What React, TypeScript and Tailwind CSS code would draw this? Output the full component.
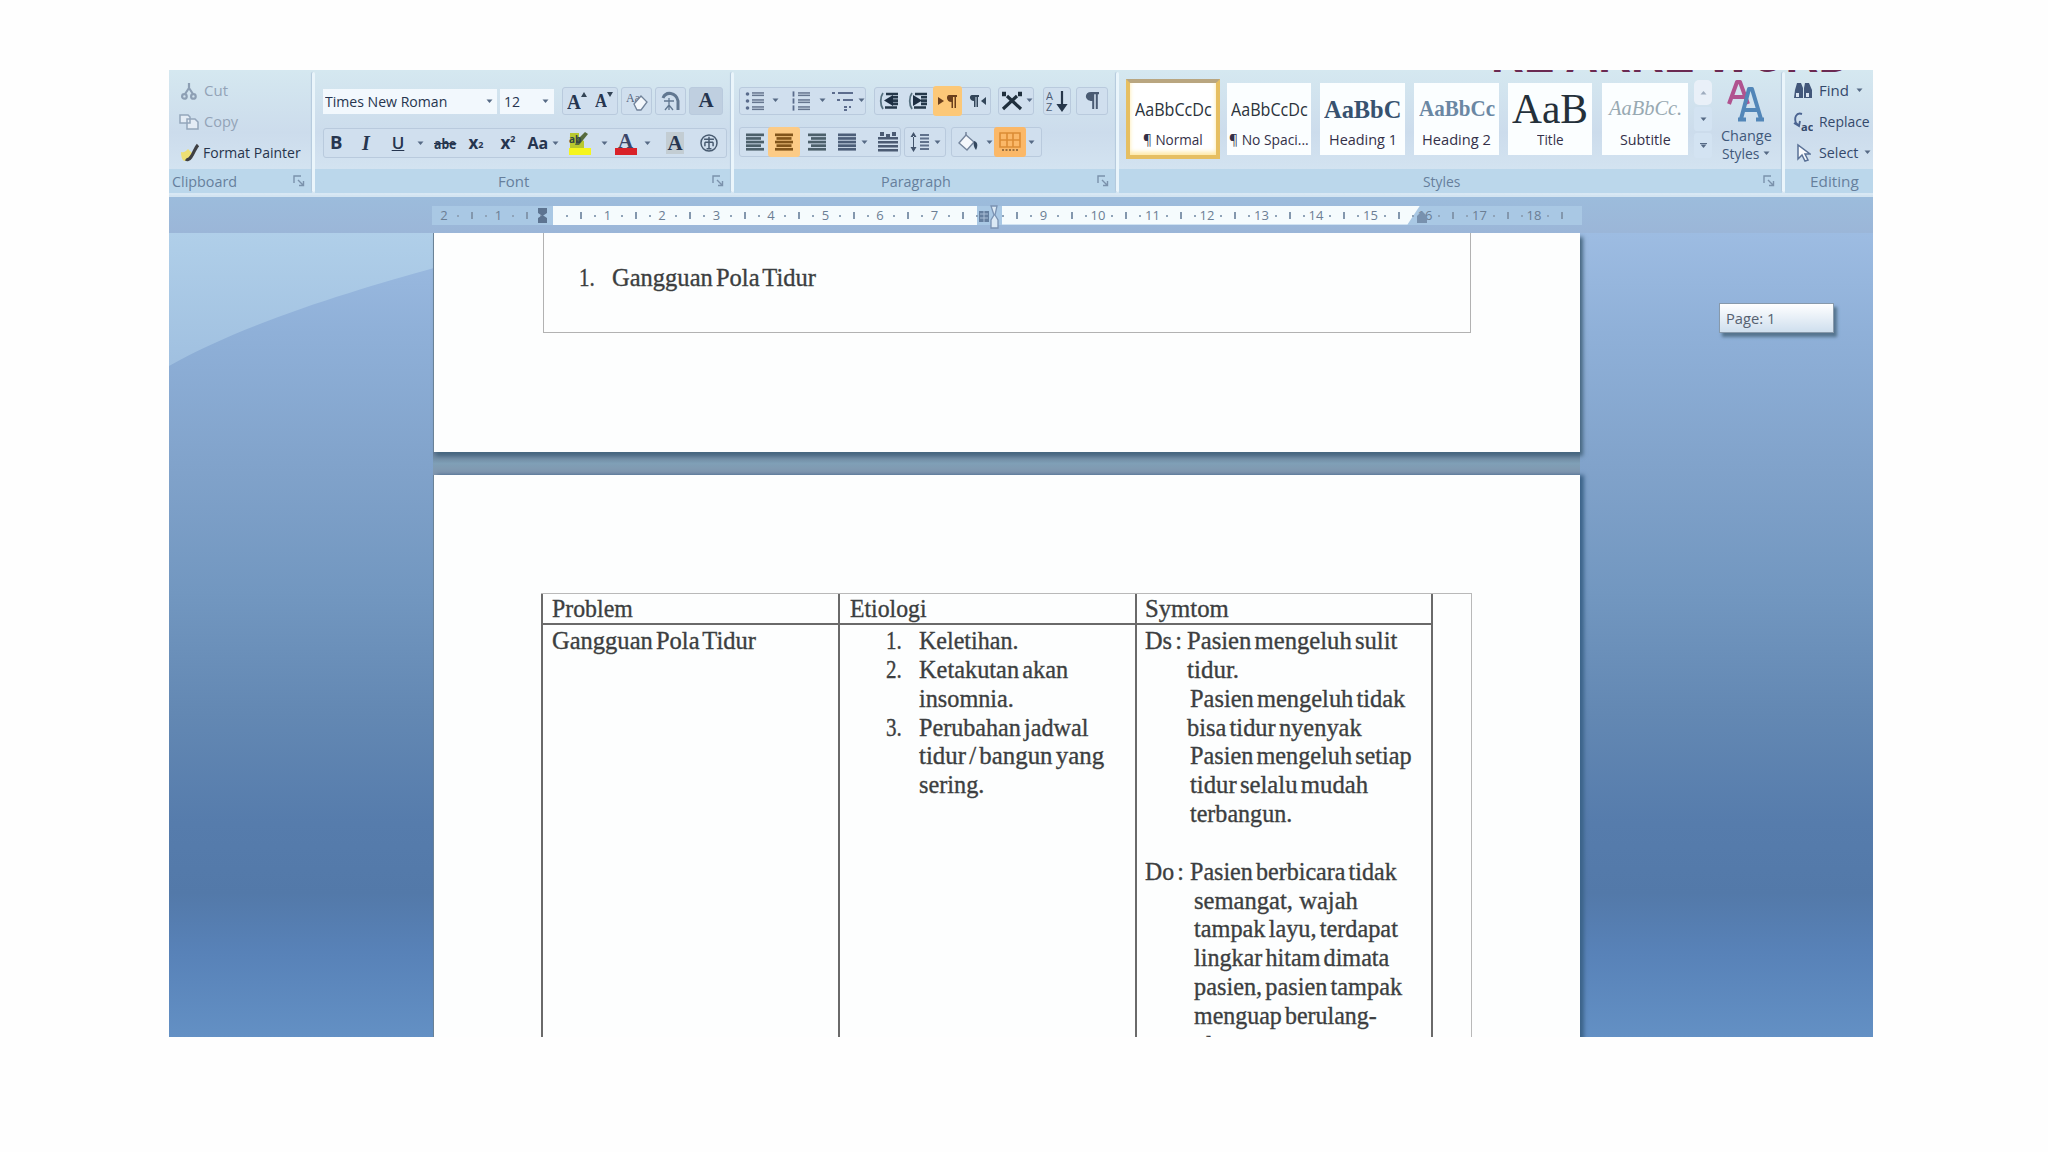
import React, { useLayoutEffect, useRef, useState } from "react";

/* Text that is squeezed or stretched horizontally to a given width. */
function Fit({ w, className = "", children }: { w: number; className?: string; children: React.ReactNode }) {
  const ref = useRef<HTMLSpanElement>(null);
  const [s, setS] = useState(1);
  useLayoutEffect(() => {
    if (ref.current) setS(w / ref.current.offsetWidth);
  }, [w]);
  return (
    <span className={"inline-block shrink-0 whitespace-pre text-left " + className} style={{ width: w }}>
      <span ref={ref} className="inline-block origin-left [text-decoration:inherit]" style={{ transform: `scaleX(${s})` }}>
        {children}
      </span>
    </span>
  );
}

function Cell({ c, children }: { c: string; children?: React.ReactNode }) {
  return <div className={"flex h-full shrink-0 items-center justify-center whitespace-nowrap " + c}>{children}</div>;
}

function Arrow() {
  return (
    <svg width="7" height="5" viewBox="0 0 7 5" className="shrink-0">
      <path d="M0.5 0.5h6L3.5 4z" fill="#566a85" />
    </svg>
  );
}

function Launcher() {
  return (
    <svg width="12" height="12" viewBox="0 0 12 12" fill="none" stroke="#7b92ac" strokeWidth="1.4">
      <path d="M1 8V1h7M5 5l5 5M10.5 6v4.5H6" />
    </svg>
  );
}

function Lines({ ws, align = "start", color = "#4c606b" }: { ws: number[]; align?: string; color?: string }) {
  return (
    <svg width="18" height="18" viewBox="0 0 18 18" className="shrink-0">
      {ws.map((w, i) => (
        <rect key={i} x={align === "start" ? 0 : align === "end" ? 18 - w : (18 - w) / 2} y={0.5 + i * 3.6} width={w} height="2.7" fill={color} />
      ))}
    </svg>
  );
}

function ListIcon({ kind }: { kind: "dots" | "nums" }) {
  return (
    <svg width="19" height="20" viewBox="0 0 19 20" className="shrink-0">
      {[3, 10, 17].map((y) => (
        <g key={y}>
          {kind === "dots" ? <circle cx="2.5" cy={y} r="1.8" fill="#5a6c8c" /> : <rect x="1.6" y={y - 2.6} width="1.8" height="5.2" fill="#5a6c8c" />}
          <rect x="7" y={y - 1.8} width="12" height="1.5" fill="#66768f" />
          <rect x="7" y={y + 0.6} width="12" height="1.5" fill="#66768f" />
        </g>
      ))}
    </svg>
  );
}

function IndentIcon({ dir }: { dir: "l" | "r" }) {
  return (
    <svg width="20" height="18" viewBox="0 0 20 18" className="shrink-0">
      <path d="M4 1C1 5 1 13 4 17" stroke="#55707f" strokeWidth="1.8" fill="none" />
      <path d="M7 2h12M13 5.3h6M13 8.6h6M13 11.9h6M6 15.5h12" stroke="#24384a" strokeWidth="2.6" />
      <path d={dir === "l" ? "M5 8.500l9-5.500v11z" : "M14 8.500L5 3v11z"} fill="#1c2e42" />
    </svg>
  );
}

const sep = <div className="mt-[2px] mb-[3px] w-[3px] shrink-0 rounded-full bg-[#eaf5fb] shadow-[-1px_0_1px_#b4c9dc]" />;
const box = "flex h-[28px] shrink-0 items-center rounded-[3px] border border-[#b9cadd] bg-[#d0dfee]";

function Group({ c, label, labelClass, launcher, children }: { c: string; label: React.ReactNode; labelClass?: string; launcher?: boolean; children: React.ReactNode }) {
  return (
    <div className={"flex shrink-0 flex-col " + c}>
      <div className="h-[99px]">{children}</div>
      <div className={"flex h-[24px] items-center bg-[#bbd7eb] text-[15px] text-[#667f9c] " + (labelClass ?? "justify-center")}>
        <span className={launcher ? "flex flex-1 justify-center" : ""}>{label}</span>
        {launcher && <span className="mr-[7px]"><Launcher /></span>}
      </div>
    </div>
  );
}

function StyleCard({ c, sample, name, on }: { c: string; sample: React.ReactNode; name: React.ReactNode; on?: boolean }) {
  return (
    <div
      className={
        "flex shrink-0 flex-col items-center overflow-hidden " +
        (on
          ? "h-[80px] border-4 border-[#e6bf62] border-t-[#b9a680] bg-white shadow-[inset_0_-3px_4px_#ffe9a6] "
          : "h-[72px] bg-[#fbfeff] ") + c
      }
    >
      <div className="mt-[7px] flex h-[38px] w-full items-center justify-center">{sample}</div>
      <div className="flex h-[22px] items-center text-[14px] font-medium text-[#343048]">{name}</div>
    </div>
  );
}

function Ribbon() {
  return (
    <div className="relative h-[127px] overflow-hidden bg-[#d3e4f1]">
      <div className="flex h-[125px] bg-linear-to-b from-[#d5e8f0] via-[#ccdcec] to-[#d8e8f4]">
        <Group c="w-[143px]" launcher labelClass="" label={<span className="-ml-[54px]"><Fit w={65}>Clipboard</Fit></span>}>
          <div className="flex h-full flex-col pt-[5px] text-[15px] text-[#93a3b7]">
            <div className="flex h-[31px] items-center">
              <span className="ml-[12px] flex w-[23px]">
                <svg width="16" height="18" viewBox="0 0 16 18" fill="none" stroke="#8d9fb4" strokeWidth="2.2">
                  <path d="M8 1v5l-4 6M8 6l4 6" /><circle cx="3.4" cy="14.4" r="2.3" /><circle cx="12.4" cy="14.4" r="2.3" />
                </svg>
              </span>
              <Fit w={24}>Cut</Fit>
            </div>
            <div className="flex h-[31px] items-center">
              <span className="ml-[10px] flex w-[25px]">
                <svg width="20" height="17" viewBox="0 0 20 17" fill="#e4ecf5" stroke="#94a6bb" strokeWidth="1.5">
                  <path d="M1 2h8l2 2v6H1zM8 6h8l3 3v7H8z" />
                </svg>
              </span>
              <Fit w={34}>Copy</Fit>
            </div>
            <div className="flex h-[31px] items-center text-[#27344c]">
              <span className="ml-[11px] flex w-[23px]">
                <svg width="20" height="20" viewBox="0 0 20 20">
                  <path d="M1 9c3 1 5-1 7-3l5 5c-2 3-4 6-8 7-3 0-4-5-4-9z" fill="#eddf74" />
                  <path d="M18 2c-3 3-4 8-7 12-2 3-4 3-5 2" fill="none" stroke="#3f4043" strokeWidth="3.2" />
                </svg>
              </span>
              <Fit w={98}>Format Painter</Fit>
            </div>
          </div>
        </Group>
        {sep}
        <Group c="w-[416px]" launcher labelClass="" label={<Fit w={31}>Font</Fit>}>
          <div className="flex h-full flex-col pt-[17px] pl-[8px] text-[#26354f]">
            <div className="flex h-[28px] items-center">
              <div className="flex h-[25px] w-[174px] items-center justify-between bg-[#f2f8fd] pr-[4px] pl-[2px] text-[15px]"><Fit w={122}>Times New Roman</Fit><Arrow /></div>
              <div className="ml-[3px] flex h-[25px] w-[54px] items-center justify-between bg-[#f2f8fd] pr-[5px] pl-[4px] text-[15px]"><Fit w={16}>12</Fit><Arrow /></div>
              <div className={box + " ml-[8px] w-[56px] font-['Liberation_Serif'] font-bold"}>
                <Cell c="w-[27px] text-[22px]"><Fit w={14}>A</Fit><svg width="6" height="5" className="mb-[14px]"><path d="M0 5L3 0l3 5z" fill="#345" /></svg></Cell>
                <Cell c="w-[28px] text-[18px]"><Fit w={12}>A</Fit><svg width="6" height="5" className="mb-[14px]"><path d="M0 0h6L3 5z" fill="#345" /></svg></Cell>
              </div>
              <div className={box + " ml-[3px] w-[31px]"}>
                <Cell c="w-[29px]"><svg width="22" height="22" viewBox="0 0 22 22"><text x="0" y="12" fontSize="12" fill="#51627a" fontFamily="Liberation Serif">Aa</text><path d="M8 14l7-8 6 6-6 8h-4z" fill="#f4f8fc" stroke="#71839a" strokeWidth="1.3" /></svg></Cell>
              </div>
              <div className={box + " ml-[3px] w-[31px]"}>
                <Cell c="w-[29px]"><svg width="22" height="22" viewBox="0 0 22 22" fill="none" stroke="#627891"><path d="M3 8C6 1 16 2 18 11v9" strokeWidth="3" /><path d="M4 11h10M9 8v12M5 20l4-5 4 5" strokeWidth="1.3" /></svg></Cell>
              </div>
              <div className="ml-[3px] flex h-[28px] w-[34px] shrink-0 items-center rounded-[3px] border border-[#b9cadd] bg-[#bfcfe0] font-['Liberation_Serif'] text-[21px] font-bold"><Cell c="w-full">A</Cell></div>
            </div>
            <div className={box + " mt-[13px] h-[30px] w-[404px] text-[17px] font-bold"}>
              <Cell c="w-[24px]"><Fit w={12}>B</Fit></Cell>
              <Cell c="w-[36px] font-['Liberation_Serif'] text-[20px] italic">I</Cell>
              <Cell c="w-[28px] font-semibold underline">U</Cell>
              <Cell c="w-[16px]"><Arrow /></Cell>
              <Cell c="w-[34px] text-[15px]"><Fit w={22} className="line-through">abe</Fit></Cell>
              <Cell c="w-[28px]">x<sub className="text-[9px]">2</sub></Cell>
              <Cell c="w-[36px]">x<sup className="text-[9px]">2</sup></Cell>
              <Cell c="w-[24px] text-[16px]"><Fit w={21}>Aa</Fit></Cell>
              <Cell c="w-[10px]"><Arrow /></Cell>
              <Cell c="w-[40px]">
                <svg width="24" height="25" viewBox="0 0 24 25"><path d="M2 2h9v5l5 3v9H2z" fill="#b9c92f" /><path d="M20 3l-9 11H7l2-5 8-8z" fill="#566a3c" /><text x="1" y="12" fontSize="10" fill="#344" fontFamily="Open Sans">ab</text><path d="M1 17h22v7H1z" fill="#f5f51d" /></svg>
              </Cell>
              <Cell c="w-[8px]"><Arrow /></Cell>
              <Cell c="w-[36px]">
                <svg width="24" height="25" viewBox="0 0 24 25"><text x="4" y="17" fontSize="21" fontWeight="bold" fill="#3c4668" fontFamily="Liberation Serif">A</text><path d="M1 17h22v7H1z" fill="#d92128" /></svg>
              </Cell>
              <Cell c="w-[6px]"><Arrow /></Cell>
              <Cell c="w-[50px] font-['Liberation_Serif'] text-[21px]"><span className="bg-[#c3cdd3] px-[1px] leading-[22px]">A</span></Cell>
              <Cell c="w-[18px]"><svg width="22" height="22" viewBox="0 0 22 22" fill="none" stroke="#475a70" strokeWidth="1.8"><circle cx="11" cy="11" r="9.8" /><path d="M5 6.5h12M11 3.5v15M6 10h10M6 10v5M16 10v5M8 18h6" /></svg></Cell>
            </div>
          </div>
        </Group>
        {sep}
        <Group c="w-[382px]" launcher labelClass="" label={<Fit w={70}>Paragraph</Fit>}>
          <div className="flex h-full flex-col pt-[15px] pl-[5px]">
            <div className="flex h-[31px] items-center">
              <div className={box + " w-[127px]"}>
                <Cell c="w-[29px]"><ListIcon kind="dots" /></Cell>
                <Cell c="w-[12px]"><Arrow /></Cell>
                <Cell c="w-[38px]"><ListIcon kind="nums" /></Cell>
                <Cell c="w-[6px]"><Arrow /></Cell>
                <Cell c="w-[34px]"><svg width="23" height="22" viewBox="0 0 23 22" stroke="#5c6d8e" strokeWidth="2"><path d="M1 3h3M7 3h15M6 10h3M12 10h10M13 17h3M18 17h2M13 20h3" /></svg></Cell>
                <Cell c="w-[4px]"><Arrow /></Cell>
              </div>
              <div className={box + " ml-[8px] w-[117px]"}>
                <Cell c="w-[28px]"><IndentIcon dir="l" /></Cell>
                <Cell c="w-[30px]"><IndentIcon dir="r" /></Cell>
                <div className="flex h-[30px] w-[29px] shrink-0 items-center justify-center rounded-[3px] bg-[#fcc878]">
                  <svg width="20" height="18" viewBox="0 0 20 18" fill="#6b3f1c"><path d="M0 5l6 4-6 4zM11 3h8v2h-1v11h-1.500V5h-1.500v11h-1.500v-6C8 10 8 3 11 3z" /></svg>
                </div>
                <Cell c="w-[29px]"><svg width="18" height="16" viewBox="0 0 18 16" fill="#33465a"><path d="M18 4l-5 4 5 4zM4 2h7v2h-1v10H8.500V4H7.500v10H6V8C1 8 1 2 4 2z" /></svg></Cell>
              </div>
              <div className={box + " ml-[7px] w-[36px]"}>
                <Cell c="w-[26px]"><svg width="22" height="20" viewBox="0 0 22 20" fill="none" stroke="#1f2f3d" strokeWidth="3.200"><path d="M2 18L16 5M6 5l14 13" /><path d="M1 3h4M17 3h4" strokeWidth="4.500" /></svg></Cell>
                <Cell c="w-[8px]"><Arrow /></Cell>
              </div>
              <div className={box + " ml-[9px] w-[28px]"}>
                <Cell c="w-full"><svg width="22" height="22" viewBox="0 0 22 22"><text x="0" y="10" fontSize="11" fill="#4b5c75" fontFamily="Open Sans">A</text><text x="0" y="21" fontSize="11" fill="#4b5c75" fontFamily="Open Sans">Z</text><path d="M16 1v17M12.5 15l3.500 5 3.500-5z" stroke="#26364a" strokeWidth="2.200" fill="#26364a" /></svg></Cell>
              </div>
              <div className={box + " ml-[5px] w-[32px]"}>
                <Cell c="w-full"><svg width="14" height="19" viewBox="0 0 14 19" fill="#4a5b73"><path d="M6 1h8v2.200h-1.200V18h-2V3.200H9.200V18h-2v-8C-1 10-1 1 6 1z" /></svg></Cell>
              </div>
            </div>
            <div className="mt-[10px] flex h-[32px] items-center">
              <div className={box + " h-[30px] w-[162px] pl-[2px]"}>
                <Cell c="w-[26px]"><Lines ws={[18, 15, 18, 15, 18]} /></Cell>
                <div className="flex h-[30px] w-[32px] shrink-0 items-center justify-center rounded-[3px] bg-[#fccb86]"><Lines ws={[18, 15, 18, 15, 18]} align="mid" color="#82551a" /></div>
                <Cell c="w-[34px]"><Lines ws={[18, 15, 18, 15, 18]} align="end" /></Cell>
                <Cell c="w-[26px]"><Lines ws={[18, 18, 18, 18, 18]} color="#4c5e78" /></Cell>
                <Cell c="w-[8px]"><Arrow /></Cell>
                <Cell c="w-[40px]"><svg width="20" height="20" viewBox="0 0 20 20" fill="#4b5b73"><path d="M2 0h4v4H2zM14 0h4v4h-4zM8 2h4v3H8zM0 5h20v2.500H0zM0 9h20v2.500H0zM0 13h20v2.500H0zM0 17h20v2.500H0z" /></svg></Cell>
              </div>
              <div className={box + " ml-[3px] h-[30px] w-[42px]"}>
                <Cell c="w-[29px]"><svg width="20" height="20" viewBox="0 0 20 20"><path d="M3.500 0l3 5h-6zM3.500 20l3-5h-6zM3 4v12h1V4z" fill="#43546c" /><path d="M10 3h9M10 6.500h9M10 10h9M10 13.500h9M10 17h9" stroke="#60728c" strokeWidth="1.800" /></svg></Cell>
                <Cell c="w-[6px]"><Arrow /></Cell>
              </div>
              <div className={box + " ml-[5px] h-[30px] w-[91px]"}>
                <Cell c="w-[32px]"><svg width="22" height="20" viewBox="0 0 22 20"><path d="M9 3l8 7-7 8-8-7z" fill="#f5f8fc" stroke="#75859c" strokeWidth="1.400" /><path d="M9 3V0" stroke="#75859c" strokeWidth="1.500" /><path d="M17 9c4 1 4 5 2 9-2-3-3-5-2-9z" fill="#34475e" /></svg></Cell>
                <Cell c="w-[10px]"><Arrow /></Cell>
                <div className="flex h-[30px] w-[32px] shrink-0 items-center justify-center rounded-[3px] bg-[#fbb868]"><svg width="22" height="20" viewBox="0 0 22 20" fill="none" stroke="#dc8c35" strokeWidth="1.600"><path d="M1 1h20v14H1zM8 1v14M14 1v14M1 8h20" /><path d="M3 18h16" stroke="#7d5a33" strokeDasharray="2 1.500" /></svg></div>
                <Cell c="w-[10px]"><Arrow /></Cell>
              </div>
            </div>
          </div>
        </Group>
        {sep}
        <Group c="w-[663px]" launcher labelClass="" label={<Fit w={37}>Styles</Fit>}>
          <div className="flex h-full items-center pb-[1px]">
            <StyleCard on c="ml-[7px] w-[94px]" sample={<Fit w={77} className="text-[18px] text-[#2b333b]">AaBbCcDc</Fit>} name={<Fit w={60}>¶ Normal</Fit>} />
            <StyleCard c="ml-[7px] w-[84px]" sample={<Fit w={77} className="text-[18px] text-[#2b333b]">AaBbCcDc</Fit>} name={<Fit w={80}>¶ No Spaci...</Fit>} />
            <StyleCard c="ml-[9px] w-[85px]" sample={<Fit w={77} className="font-['Liberation_Serif'] text-[26px] font-bold text-[#37526f]">AaBbC</Fit>} name={<Fit w={68}>Heading 1</Fit>} />
            <StyleCard c="ml-[9px] w-[85px]" sample={<Fit w={76} className="font-['Liberation_Serif'] text-[23px] font-bold text-[#6a87a3]">AaBbCc</Fit>} name={<Fit w={69}>Heading 2</Fit>} />
            <StyleCard c="ml-[9px] w-[84px]" sample={<Fit w={76} className="font-['Liberation_Serif'] text-[42px] leading-[36px] text-[#24303a]">AaB</Fit>} name={<Fit w={27}>Title</Fit>} />
            <StyleCard c="ml-[10px] w-[86px]" sample={<Fit w={73} className="font-['Liberation_Serif'] text-[21px] text-[#98a9b2] italic">AaBbCc.</Fit>} name={<Fit w={51}>Subtitle</Fit>} />
            <div className="ml-[6px] flex h-[78px] w-[18px] flex-col gap-[2px]">
              <div className="flex flex-1 items-center justify-center rounded-[5px] bg-[#e9f0f8]"><span className="rotate-180 opacity-50"><Arrow /></span></div>
              <div className="flex flex-1 items-center justify-center rounded-[3px] bg-[#d3e3f2]"><Arrow /></div>
              <div className="flex flex-1 flex-col items-center justify-center rounded-[3px] bg-[#d3e3f2]"><span className="h-px w-[7px] bg-[#566a85]" /><Arrow /></div>
            </div>
            <div className="ml-[4px] flex h-[90px] w-[60px] flex-col items-center pt-[6px] text-[15px] leading-[18px] text-[#3f587a]">
              <svg width="38" height="46" viewBox="0 0 38 46" className="shrink-0" fill="none" strokeLinejoin="round">
                <path d="M2 24L10 2h3l8 22M5 17h12" stroke="#b0538f" strokeWidth="4" />
                <path d="M14 39L22 9h3l9 30M18 30h13M11 39.500h8M29 39.500h8" stroke="#5286b8" strokeWidth="4" />
              </svg>
              <Fit w={51}>Change</Fit>
              <span className="flex items-center gap-[4px]"><Fit w={37}>Styles</Fit><Arrow /></span>
            </div>
          </div>
        </Group>
        {sep}
        <Group c="w-[88px]" label={<span className="ml-[10px]"><Fit w={49}>Editing</Fit></span>}>
          <div className="flex h-full flex-col pt-[5px] pl-[8px] text-[15px] text-[#34496b]">
            <div className="flex h-[31px] items-center">
              <span className="flex w-[26px]"><svg width="20" height="18" viewBox="0 0 20 18" fill="#42577a"><path d="M4 1h4l2 5v10H1l1-8zM12 1h4l3 7v8h-8V6z" /><path d="M3 11h3v4H3zM13 11h3v4h-3z" fill="#dbe6f2" /></svg></span>
              <Fit w={30}>Find</Fit><span className="ml-[7px]"><Arrow /></span>
            </div>
            <div className="flex h-[31px] items-center">
              <span className="flex w-[26px]"><svg width="20" height="20" viewBox="0 0 20 20"><path d="M9 2C3 0 1 6 3 11l2 2M1 11l5 3 1-5" fill="none" stroke="#4a6390" strokeWidth="1.900" /><text x="8" y="19" fontSize="11" fontWeight="bold" fill="#34496b" fontFamily="Open Sans">ac</text></svg></span>
              <Fit w={51}>Replace</Fit>
            </div>
            <div className="flex h-[31px] items-center">
              <span className="flex w-[26px] pl-[2px]"><svg width="16" height="20" viewBox="0 0 16 20"><path d="M3 2v14l4-4 3 6 3-1-3-6h5z" fill="#f7fafd" stroke="#5a7196" strokeWidth="1.500" /></svg></span>
              <Fit w={39}>Select</Fit><span className="ml-[6px]"><Arrow /></span>
            </div>
          </div>
        </Group>
      </div>
      {/* Lower edge of the banner that lies over the ribbon's top */}
      <div className="absolute top-0 left-[1322px] h-[3px] w-[360px] overflow-hidden">
        <div className="-mt-[42px] font-['Liberation_Sans'] text-[50px] leading-[54px] font-bold text-[#6b2a52]"><Fit w={360}>RE ARRE WORD</Fit></div>
      </div>
    </div>
  );
}

function Ruler() {
  const nums = Array.from({ length: 21 }, (_, i) => i - 2);
  return (
    <div className="relative flex h-[36px] items-center bg-linear-to-b from-[#9cbcdc] to-[#9bb6d8] pl-[263px]">
      <div className="relative flex h-[19px] w-[1150px] bg-[#a9c8e4]">
        <div className="ml-[121px] w-[424px] bg-[#f5fbfd]" />
        <div className="ml-[25px] w-[418px] bg-[#f5fbfd] [clip-path:polygon(0_0,100%_0,97%_100%,0_100%)]" />
        {nums.map((n) => (
          <React.Fragment key={n}>
            {n !== 0 && n !== 8 && (
              <span className="absolute top-[1px] w-[24px] text-center text-[13px] leading-[17px] text-[#6b7e94]" style={{ left: 109 + n * 54.5 }}>{Math.abs(n)}</span>
            )}
            <span className="absolute top-[9px] h-[2px] w-[2px] bg-[#8fa3b8]" style={{ left: 134 + n * 54.5 }} />
            {n < 19 && <span className="absolute top-[6px] h-[7px] w-[2px] bg-[#8397ad]" style={{ left: 148 + n * 54.5 }} />}
            {n < 18 && <span className="absolute top-[9px] h-[2px] w-[2px] bg-[#8fa3b8]" style={{ left: 162 + n * 54.5 }} />}
          </React.Fragment>
        ))}
        <svg width="12" height="19" viewBox="0 0 12 19" className="absolute left-[105px]" fill="#5d7491"><path d="M1 2h9v5l-4.500 3L1 7zM5.500 9L10 12v5H1v-5z" /></svg>
        <svg width="28" height="28" viewBox="0 0 28 28" className="absolute -top-[4px] left-[545px]"><path d="M2 9h10v11H2z" fill="#657f9f" /><path d="M3 12h8M3 16h8M7 9v11" stroke="#a9bed6" /><path d="M14 4h6l-2 9 3 5v8h-7v-8l3-5z" fill="#dbe9f5" stroke="#7b93b3" strokeWidth="1.300" /></svg>
        <svg width="12" height="19" viewBox="0 0 12 19" className="absolute left-[984px]" fill="#7891ae"><path d="M6 5l5 5v7H1v-7z" /></svg>
      </div>
    </div>
  );
}

function L({ p, w, children }: { p: string; w: number; children: string }) {
  return <div className={"flex h-[28.85px] " + p}><Fit w={w}>{children}</Fit></div>;
}

function Item({ n, lines }: { n: string; lines: [string, number][] }) {
  return (
    <div className="flex">
      <div className="w-[33px]"><Fit w={16}>{n}</Fit></div>
      <div>{lines.map(([t, w]) => <L key={t} p="" w={w}>{t}</L>)}</div>
    </div>
  );
}

function Doc() {
  return (
    <div className="relative h-[804px] overflow-hidden bg-[linear-gradient(180deg,#9dbce2_0px,#8fb0d8_100px,#80a2ca_240px,#7297c0_360px,#6388b3_480px,#567cac_590px,#5379a9_660px,#5882b8_720px,#6390c4_804px)] font-['Liberation_Serif'] text-[25px] leading-[28.85px] text-[#3c3e40] [-webkit-text-stroke:0.35px_#3c3e40] [word-spacing:-3px]">
      <svg width="265" height="150" viewBox="0 0 265 150" className="absolute top-0 left-0">
        <defs>
          <linearGradient id="sweep" x1="0" y1="0" x2="0" y2="1"><stop offset="0" stopColor="#b0cfe9" /><stop offset="1" stopColor="#a0c0e0" /></linearGradient>
        </defs>
        <path d="M0 0h265v35C190 56 80 88 0 133z" fill="url(#sweep)" />
      </svg>
      <div className="relative ml-[264px] h-[219px] w-[1147px] border-l border-[#6a8296] bg-[#fdfefe] shadow-[3px_4px_4px_#46667f]">
        <div className="ml-[109px] h-[100px] w-[928px] border-r border-b border-l border-[#b2b2b2] pt-[31px] pl-[35px]">
          <div className="flex"><div className="w-[33px]"><Fit w={16}>1.</Fit></div><Fit w={204}>Gangguan Pola Tidur</Fit></div>
        </div>
      </div>
      <div className="ml-[264px] h-[23px] w-[1147px] bg-linear-to-b from-[#667c96] via-[#7f9fb6] to-[#8195ad]" />
      <div className="relative ml-[264px] h-[600px] w-[1147px] border-l border-[#6a8296] bg-[#fdfefe] pt-[118px] shadow-[4px_0_4px_#3c6389]">
        <div className="ml-[107px] flex h-[470px] w-[931px] border-t border-r border-[#b9b9b9]">
          <div className="grid h-full w-[892px] shrink-0 grid-cols-[297px_297px_294px] grid-rows-[31px_1fr] border-r-2 border-l-2 border-[#6a6a6a]">
            <div className="border-r-2 border-b-2 border-[#6a6a6a] pt-[1px] pl-[9px]"><Fit w={81}>Problem</Fit></div>
            <div className="border-r-2 border-b-2 border-[#6a6a6a] pt-[1px] pl-[10px]"><Fit w={77}>Etiologi</Fit></div>
            <div className="border-b-2 border-[#6a6a6a] pt-[1px] pl-[8px]"><Fit w={84}>Symtom</Fit></div>
            <div className="border-r-2 border-[#6a6a6a] pt-[2px] pl-[9px]"><Fit w={204}>Gangguan Pola Tidur</Fit></div>
            <div className="border-r-2 border-[#6a6a6a] pt-[2px] pl-[46px]">
              <Item n="1." lines={[["Keletihan.", 99]]} />
              <Item n="2." lines={[["Ketakutan akan", 149], ["insomnia.", 95]]} />
              <Item n="3." lines={[["Perubahan jadwal", 169], ["tidur / bangun yang", 185], ["sering.", 65]]} />
            </div>
            <div className="pt-[2px] pl-[8px]">
              <div className="flex"><div className="w-[42px]"><Fit w={37}>Ds :</Fit></div><Fit w={210}>Pasien mengeluh sulit</Fit></div>
              <L p="pl-[42px]" w={52}>tidur.</L>
              <L p="pl-[45px]" w={215}>Pasien mengeluh tidak</L>
              <L p="pl-[42px]" w={175}>bisa tidur nyenyak</L>
              <L p="pl-[45px]" w={222}>Pasien mengeluh setiap</L>
              <L p="pl-[45px]" w={178}>tidur selalu mudah</L>
              <L p="pl-[45px]" w={102}>terbangun.</L>
              <div className="h-[28.85px]" />
              <div className="flex"><div className="w-[45px]"><Fit w={39}>Do :</Fit></div><Fit w={207}>Pasien berbicara tidak</Fit></div>
              <L p="pl-[49px]" w={164}>semangat,  wajah</L>
              <L p="pl-[49px]" w={204}>tampak layu, terdapat</L>
              <L p="pl-[49px]" w={195}>lingkar hitam dimata</L>
              <L p="pl-[49px]" w={208}>pasien, pasien tampak</L>
              <L p="pl-[49px]" w={183}>menguap berulang-</L>
              <L p="pl-[49px]" w={60}>ulang.</L>
            </div>
          </div>
        </div>
      </div>
      <div className="absolute top-[70px] left-[1550px] flex h-[30px] w-[115px] items-center border border-[#8799ab] bg-linear-to-b from-white to-[#cfdfee] pl-[6px] font-['Open_Sans'] text-[15px] text-[#566170] shadow-[3px_4px_3px_#55758f] [-webkit-text-stroke:0] [word-spacing:0]"><Fit w={49}>Page: 1</Fit></div>
    </div>
  );
}

export default function App() {
  return (
    <div className="h-[1152px] w-[2048px] overflow-hidden bg-[#fefefe] pt-[70px] pl-[169px]">
      <div className="flex h-[967px] w-[1704px] flex-col overflow-hidden font-['Open_Sans',sans-serif]">
        <Ribbon />
        <Ruler />
        <Doc />
      </div>
    </div>
  );
}
